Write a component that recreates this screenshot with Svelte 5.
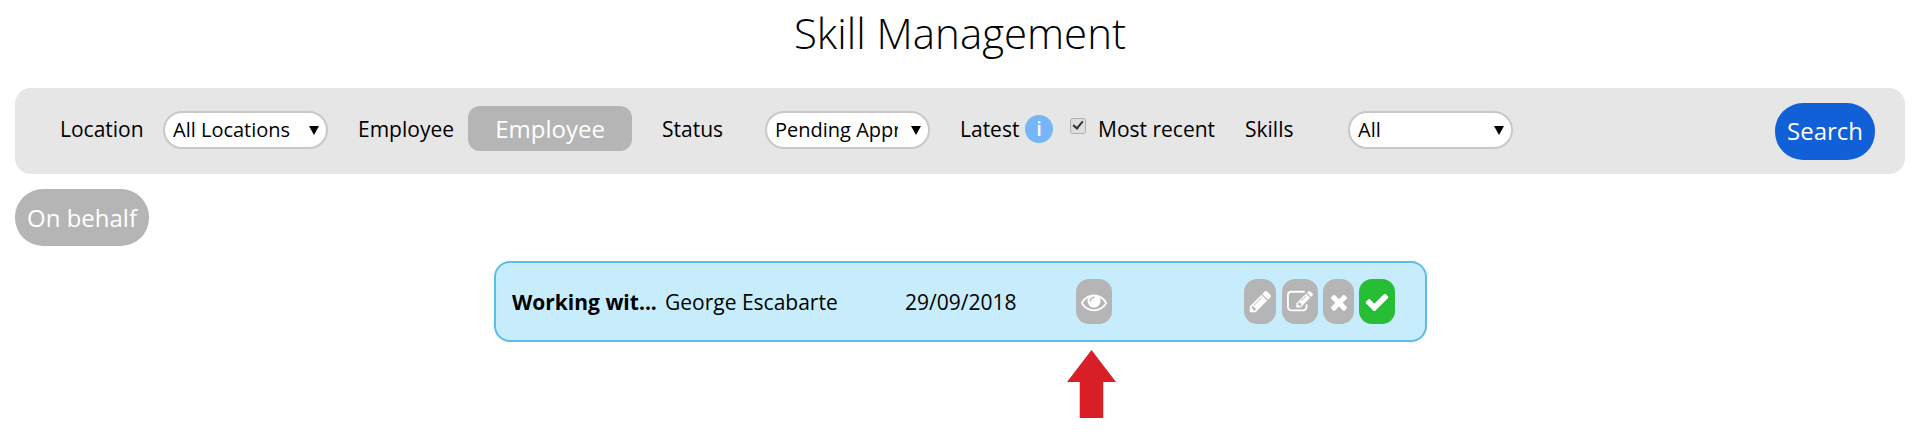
<script>
  let location = "all";
  let status = "pending";
  let skill = "all";
  let recent = true;
</script>

<div class="page">
  <h1>Skill Management</h1>

  <form class="filters" on:submit|preventDefault>
    <span class="label loc">Location</span>
    <div class="pick">
      <select bind:value={location}>
        <option value="all">All Locations</option>
      </select>
    </div>
    <span class="label emp">Employee</span>
    <button type="button" class="emp-btn">Employee</button>
    <span class="label stat">Status</span>
    <div class="pick">
      <select bind:value={status}>
        <option value="pending">Pending Approval</option>
      </select>
    </div>
    <span class="label latest">Latest</span>
    <span class="info">i</span>
    <input class="check" type="checkbox" bind:checked={recent} />
    <span class="label recent">Most recent</span>
    <span class="label skills">Skills</span>
    <div class="pick">
      <select bind:value={skill}>
        <option value="all">All</option>
      </select>
    </div>
    <button type="submit" class="search">Search</button>
  </form>

  <button type="button" class="behalf">On behalf</button>

  <div class="row-wrap">
    <div class="card">
      <span class="name">Working wit...</span>
      <span class="person">George Escabarte</span>
      <span class="date">29/09/2018</span>
      <button type="button" class="act view" aria-label="View">
        <svg viewBox="0 0 1792 1792" width="26" height="26"><path d="M1664 960q-152-236-381-353 61 104 61 225 0 185-131.500 316.500t-316.500 131.500-316.500-131.500-131.500-316.500q0-121 61-225-229 117-381 353 133 205 333.500 326.500t434.500 121.500 434.500-121.500 333.500-326.500zm-720-384q0-20-14-34t-34-14q-125 0-214.500 89.500t-89.500 214.500q0 20 14 34t34 14 34-14 14-34q0-86 61-147t147-61q20 0 34-14t14-34zm848 384q0 34-20 69-140 230-376.500 368.500t-499.500 138.500-499.500-139-376.500-368q-20-35-20-69t20-69q140-229 376.500-368t499.500-139 499.500 139 376.500 368q20 35 20 69z"/></svg>
      </button>
      <div class="actions">
        <button type="button" class="act pencil" aria-label="Edit">
          <svg viewBox="0 0 1792 1792" width="25" height="25"><path d="M491 1536l91-91-235-235-91 91v107h128v128h107zm523-928q0-22-22-22-10 0-17 7l-542 542q-7 7-7 17 0 22 22 22 10 0 17-7l542-542q7-7 7-17zm-54-192l416 416-832 832h-416v-416zm683 96q0 53-37 90l-166 166-416-416 166-165q36-38 90-38 53 0 91 38l235 234q37 39 37 91z"/></svg>
        </button>
        <button type="button" class="act note" aria-label="Review">
          <svg viewBox="0 0 1792 1792" width="26" height="26"><path d="M888 1184l116-116-152-152-116 116v56h96v96h56zm440-720q-16-16-33 1l-350 350q-17 17-1 33t33-1l350-350q17-17 1-33zm80 594v190q0 119-84.500 203.500t-203.500 84.500h-832q-119 0-203.500-84.500t-84.500-203.500v-832q0-119 84.500-203.500t203.500-84.500h832q63 0 117 25 15 7 18 23 3 17-9 29l-49 49q-14 14-32 8-23-6-45-6h-832q-66 0-113 47t-47 113v832q0 66 47 113t113 47h832q66 0 113-47t47-113v-126q0-13 9-22l64-64q15-15 35-7t20 29zm-96-738l288 288-672 672h-288v-288zm444 132l-92 92-288-288 92-92q28-28 68-28t68 28l152 152q28 28 28 68t-28 68z"/></svg>
        </button>
        <button type="button" class="act cross" aria-label="Reject">
          <svg viewBox="0 0 1792 1792" width="24" height="24"><path d="M1490 1322q0 40-28 68l-136 136q-28 28-68 28t-68-28l-294-294-294 294q-28 28-68 28t-68-28l-136-136q-28-28-28-68t28-68l294-294-294-294q-28-28-28-68t28-68l136-136q28-28 68-28t68 28l294 294 294-294q28-28 68-28t68 28l136 136q28 28 28 68t-28 68l-294 294 294 294q28 28 28 68z"/></svg>
        </button>
        <button type="button" class="act ok" aria-label="Approve">
          <svg viewBox="0 0 1792 1792" width="26" height="26"><path d="M1671 566q0 40-28 68l-724 724-136 136q-28 28-68 28t-68-28l-136-136-362-362q-28-28-28-68t28-68l136-136q28-28 68-28t68 28l294 295 656-657q28-28 68-28t68 28l136 136q28 28 28 68z"/></svg>
        </button>
      </div>
    </div>
  </div>

  <!-- annotation arrow under the view button -->
  <div class="arrow"></div>
</div>

<style>
  :global(body) {
    margin: 0;
    background: #fff;
    font-family: "Open Sans", "Liberation Sans", sans-serif;
    color: #000;
  }

  .page {
    padding: 0 13px 0 15px;
  }

  h1 {
    margin: 0;
    height: 88px;
    padding-top: 5px;
    box-sizing: border-box;
    text-align: center;
    font-size: 42px;
    line-height: 56px;
    font-weight: 300;
  }

  .filters {
    display: flex;
    align-items: center;
    height: 86px;
    padding: 0 30px 4px 45px;
    background: #e6e6e6;
    border-radius: 16px;
    box-sizing: border-box;
  }

  .label {
    font-size: 21px;
    white-space: nowrap;
  }

  .loc { width: 83px; margin-right: 20px; }
  .emp { width: 95px; margin-left: 30px; margin-right: 15px; }
  .stat { width: 61px; margin-left: 30px; margin-right: 42px; }
  .latest { width: 59px; margin-left: 30px; margin-right: 6px; }
  .recent { width: 117px; margin-left: 12px; }
  .skills { width: 48px; margin-left: 30px; margin-right: 55px; }

  .pick {
    position: relative;
    width: 165px;
    height: 38px;
    margin-top: 2px;
  }

  /* native arrow is a chevron here, the design has a solid triangle */
  .pick::after {
    content: "";
    position: absolute;
    right: 9px;
    top: 15px;
    border-left: 5px solid transparent;
    border-right: 5px solid transparent;
    border-top: 9px solid #000;
    pointer-events: none;
  }

  .pick select {
    appearance: none;
    width: 100%;
    height: 100%;
    padding: 0 30px 2px 8px;
    border: 2px solid #c8c8c8;
    border-radius: 19px;
    background: #fff;
    color: #000;
    font: 20px "Open Sans", sans-serif;
  }

  .emp-btn {
    width: 164px;
    height: 45px;
    margin-top: -1px;
    border: 0;
    border-radius: 12px;
    background: #b5b5b5;
    color: #fff;
    font: 24px "Open Sans", sans-serif;
  }

  .info {
    width: 28px;
    height: 28px;
    border-radius: 50%;
    background: #74b6f7;
    color: #fff;
    font: 600 20px/28px "Open Sans", sans-serif;
    text-align: center;
  }

  .check {
    appearance: none;
    position: relative;
    width: 16px;
    height: 16px;
    margin: -6px 0 0 17px;
    border: 1px solid #b0b0b0;
    border-radius: 3px;
    background: #dedede;
    box-sizing: border-box;
  }

  .check:checked::after {
    content: "";
    position: absolute;
    left: 4px;
    top: 0;
    width: 4px;
    height: 8px;
    border: solid #333;
    border-width: 0 2px 2px 0;
    transform: rotate(40deg);
  }

  .search {
    margin: 5px 0 0 auto;
    width: 100px;
    height: 57px;
    padding: 0 0 2px;
    border: 0;
    border-radius: 28px;
    background: #1160d8;
    color: #fff;
    font: 24px "Open Sans", sans-serif;
  }

  .behalf {
    display: block;
    width: 134px;
    height: 57px;
    margin-top: 15px;
    padding: 0;
    border: 0;
    border-radius: 28px;
    background: #b5b5b5;
    color: #fff;
    font: 24px "Open Sans", sans-serif;
  }

  .row-wrap {
    display: flex;
    margin-top: 15px;
    padding-left: 479px;
  }

  .card {
    display: flex;
    align-items: center;
    width: 933px;
    height: 81px;
    box-sizing: border-box;
    padding-left: 16px;
    background: #c7edfd;
    border: 2px solid #5cbde8;
    border-radius: 16px;
    font-size: 21px;
  }

  .name {
    width: 153px;
    font-weight: 700;
    white-space: nowrap;
  }

  .person {
    width: 240px;
    white-space: nowrap;
  }

  .date {
    width: 171px;
  }

  .act {
    display: flex;
    align-items: center;
    justify-content: center;
    height: 45px;
    padding: 0;
    border: 0;
    border-radius: 13px;
    background: #b5b5b5;
  }

  .act svg {
    fill: #fff;
  }

  .view { width: 36px; }
  .pencil { width: 32px; margin-right: 1px; }
  .note { width: 36px; }
  .cross { width: 31px; }
  .ok { width: 36px; background: #27bd35; }

  .actions {
    display: flex;
    gap: 5px;
    margin-left: 132px;
  }

  .arrow {
    width: 49px;
    height: 68px;
    margin: 8px 0 0 1052px;
    background: #d81e27;
    clip-path: polygon(50% 0, 100% 47%, 74% 47%, 74% 100%, 26% 100%, 26% 47%, 0 47%);
  }
</style>
